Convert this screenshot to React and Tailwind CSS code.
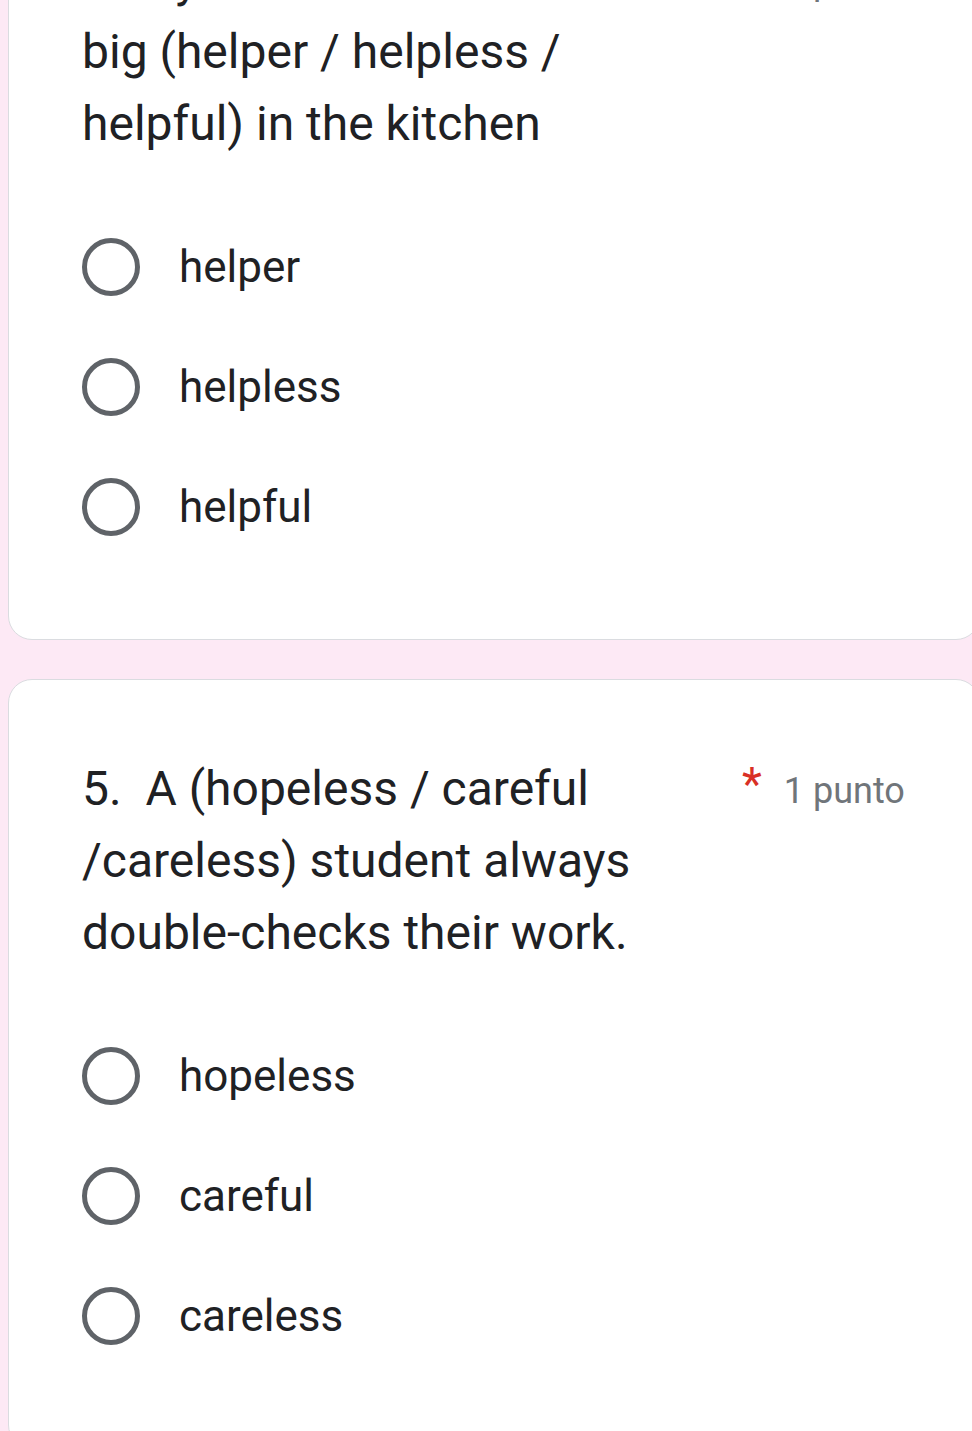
import React from 'react';

const font = { fontFamily: 'Roboto, "Liberation Sans", sans-serif' };

function Radio({ label }) {
  return (
    <div className="flex items-center h-[120px]">
      <div className="w-[58px] h-[58px] rounded-full border-[5px] border-[#5f6368] shrink-0" />
      <span className="ml-[39px] text-[44px] leading-[60px] text-[#202124]">{label}</span>
    </div>
  );
}

function QuestionCard({ lines, options, className = '' }) {
  return (
    <div
      className={`w-[972px] ml-[8px] bg-white border border-[#dadce0] rounded-[24px] pt-[73px] pb-[72px] pl-[73px] pr-[70px] ${className}`}
    >
      <div className="flex items-start">
        <div className="w-[640px] text-[48px] leading-[72px] text-[#202124]">
          {lines.map((l, i) => (
            <div key={i} className="whitespace-pre">
              {l}
            </div>
          ))}
        </div>
        <div className="flex items-start ml-[20px] h-[72px]">
          <span className="text-[#d93025] text-[46px] leading-[62px]">*</span>
          <span className="ml-[22px] text-[36px] leading-[76px] text-[#70757a]">1 punto</span>
        </div>
      </div>
      <div className="mt-[47px]">
        {options.map((o) => (
          <Radio key={o} label={o} />
        ))}
      </div>
    </div>
  );
}

export default function App() {
  return (
    <div className="w-full h-[1431px] overflow-hidden bg-[#fde9f5]" style={font}>
      <QuestionCard
        className="mt-[-130px]"
        lines={['4. My sister is a', 'big (helper / helpless /', 'helpful) in the kitchen']}
        options={['helper', 'helpless', 'helpful']}
      />
      <div className="h-[39px]" />
      <QuestionCard
        lines={['5.  A (hopeless / careful', '/careless) student always', 'double-checks their work.']}
        options={['hopeless', 'careful', 'careless']}
      />
    </div>
  );
}
